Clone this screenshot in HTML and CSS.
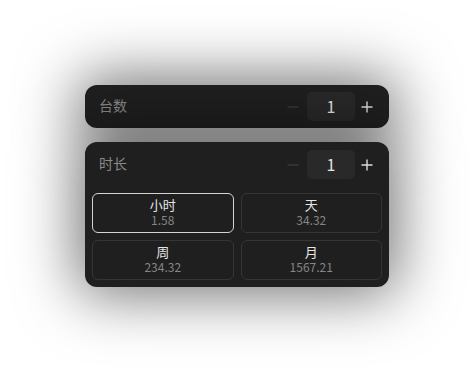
FILE: index.html
```html
<!DOCTYPE html>
<html>
  <head lang="zh">
    <meta charset="UTF-8" />
    <title>时长选择</title>
    <link rel="stylesheet" href="styles.css">
  </head>

  <body>
    <div id="panel">
      <div class="card">
        <div class="row">
          <div class="label">台数</div>
          <div class="stepper">
            <svg class="btn minus" width="14" height="14" viewBox="0 0 14 14"><path d="M1.5 7h11" stroke="currentColor" stroke-width="1.4" /></svg>
            <span class="val">1</span>
            <svg class="btn plus" width="14" height="14" viewBox="0 0 14 14"><path d="M1.5 7h11M7 1.5v11" stroke="currentColor" stroke-width="1.4" /></svg>
          </div>
        </div>
      </div>

      <div class="card">
        <div class="row">
          <div class="label">时长</div>
          <div class="stepper">
            <svg class="btn minus" width="14" height="14" viewBox="0 0 14 14"><path d="M1.5 7h11" stroke="currentColor" stroke-width="1.4" /></svg>
            <span class="val">1</span>
            <svg class="btn plus" width="14" height="14" viewBox="0 0 14 14"><path d="M1.5 7h11M7 1.5v11" stroke="currentColor" stroke-width="1.4" /></svg>
          </div>
        </div>
        <div class="grid">
          <div class="opt active">
            <div class="name">小时</div>
            <div class="price">1.58</div>
          </div>
          <div class="opt">
            <div class="name">天</div>
            <div class="price">34.32</div>
          </div>
          <div class="opt">
            <div class="name">周</div>
            <div class="price">234.32</div>
          </div>
          <div class="opt">
            <div class="name">月</div>
            <div class="price">1567.21</div>
          </div>
        </div>
      </div>
    </div>
  </body>
</html>
```

FILE: styles.css
```css
body {
  margin: 0;
  padding: 0;
  min-height: 372px;
  background: #ffffff;
  font-family: "Noto Sans CJK SC", "Noto Sans", sans-serif;
}

#panel {
  width: 304px;
  padding: 85px 0 0 85px;
  display: flex;
  flex-direction: column;
  gap: 14px;
}

.card {
  background: #1f1f1f;
  border-radius: 12px;
  box-shadow: 0 0 60px 8px rgba(0, 0, 0, 0.55);
  padding: 7px 15px 7px 14px;
}

.card .row {
  display: flex;
  align-items: center;
  justify-content: space-between;
  height: 29px;
}

.card + .card {
  padding: 8px 7px 7px 7px;
}

.card + .card .row {
  padding: 0 8px 0 7px;
}

.label {
  font-size: 14px;
  line-height: 18px;
  padding-bottom: 3px;
  color: #8a8a8a;
}

.stepper {
  display: flex;
  align-items: center;
}

.stepper .btn {
  display: block;
}

.stepper .minus {
  color: #3a3a3a;
  margin-right: 7px;
}

.stepper .plus {
  color: #dcdcdc;
  margin-left: 5px;
}

.stepper .val {
  width: 48px;
  height: 29px;
  line-height: 29px;
  text-align: center;
  background: #292929;
  border-radius: 5px;
  color: #e4e4e4;
  font-size: 16px;
}

.grid {
  display: grid;
  grid-template-columns: 1fr 1fr;
  gap: 7px;
  margin-top: 14px;
}

.opt {
  height: 40px;
  border: 1px solid #353535;
  border-radius: 6px;
  box-sizing: border-box;
  display: flex;
  flex-direction: column;
  align-items: center;
  justify-content: center;
  padding-bottom: 2px;
}

.opt.active {
  border: 1.5px solid #d4d4d4;
}

.opt .name {
  font-size: 13px;
  line-height: 16px;
  color: #e6e6e6;
}

.opt .price {
  font-size: 12px;
  line-height: 14px;
  color: #858585;
}
```
